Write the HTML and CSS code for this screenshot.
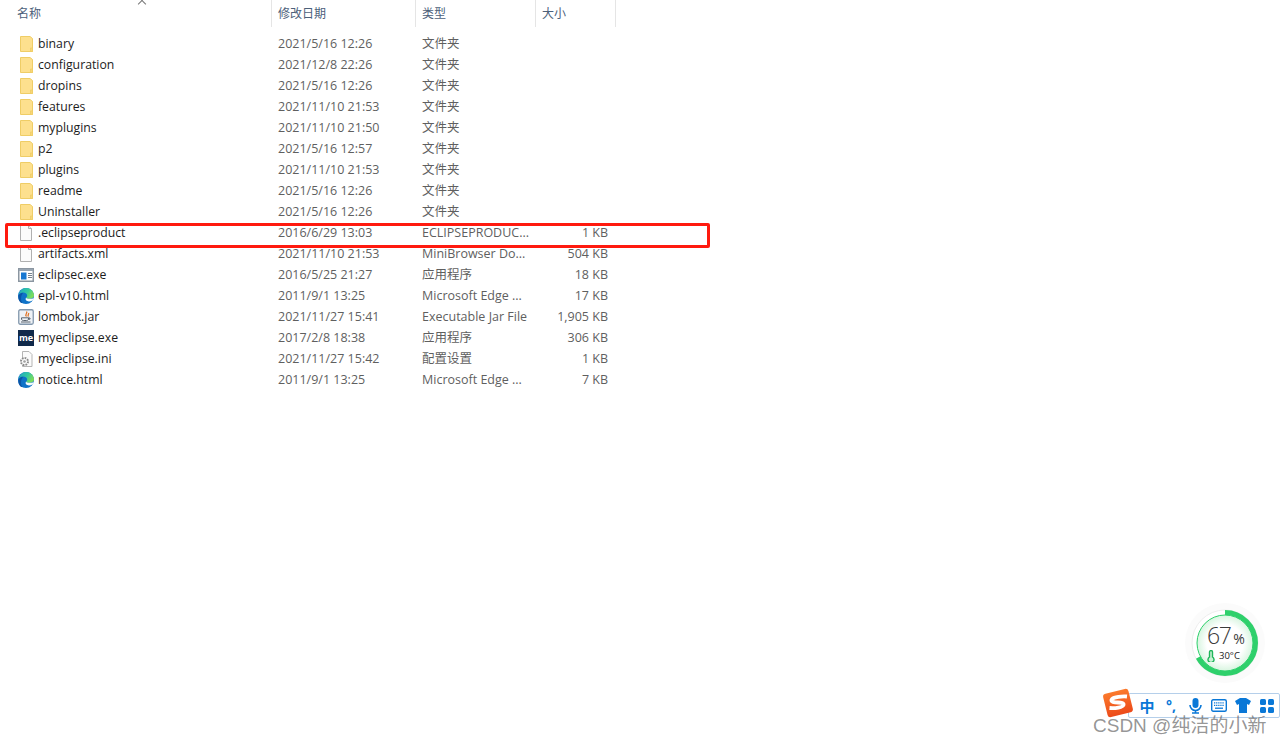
FILE: index.html
```html
<!DOCTYPE html>
<html lang="zh-CN">
  <head>
    <meta charset="utf-8">
    <title>myeclipse</title>
    <link rel="stylesheet" href="styles.css">
  </head>
  <body>
    <svg class="defs" width="0" height="0">
      <defs>
        <linearGradient id="edgeGreen" x1="0" y1="0" x2="1" y2=".4">
          <stop offset="0" stop-color="#1fa6c4"/>
          <stop offset=".6" stop-color="#33c8a0"/>
          <stop offset="1" stop-color="#7bdc5c"/>
        </linearGradient>
        <radialGradient id="gaugeGlow">
          <stop offset=".65" stop-color="#ffffff"/>
          <stop offset="1" stop-color="#d8f5e0"/>
        </radialGradient>
        <linearGradient id="sogouFill" x1="0" y1="0" x2="0" y2="1">
          <stop offset="0" stop-color="#fb7a2c"/>
          <stop offset="1" stop-color="#ec4a1a"/>
        </linearGradient>
        <symbol id="folder" viewBox="0 0 16 16">
          <path d="M2.500 .5h9.500l2.500 2v13h-12z" fill="#fde08e" stroke="#efcd66"/>
          <path d="M12.500 15.500v-3.500h2v3.500z" fill="#f8d678" stroke="#efcd66" stroke-width=".8"/>
        </symbol>
        <symbol id="file" viewBox="0 0 16 16">
          <path d="M2.500 .5h8l3 3v12h-11z" fill="#fbfbfb" stroke="#b0b0b0"/>
          <path d="M10.500 .5v3h3" fill="#eee" stroke="#b0b0b0"/>
        </symbol>
        <symbol id="exe" viewBox="0 0 16 16">
          <rect x=".75" y="1.750" width="14.500" height="12.500" fill="#fff" stroke="#8b96a1" stroke-width="1.500"/>
          <rect x="1" y="2" width="14" height="2" fill="#98a5b2"/>
          <rect x="3" y="5.500" width="5.500" height="7" fill="#1878d2"/>
          <path d="M10 6.500h4M10 8.500h4M10 10.500h4" stroke="#74818e"/>
        </symbol>
        <symbol id="edge" viewBox="0 0 16 16">
          <circle cx="8" cy="8" r="8" fill="#0e72c8"/>
          <path d="M3 15C.5 13 0 10 .5 7.500 1.500 5.500 3.500 4.500 5.500 4.500c-1.500 1.500-2.500 3.500-2.500 6 0 2 .5 3.500 1.500 4.500z" fill="#0a55a6"/>
          <path d="M.5 7C1.500 2.500 5 0 8 0c4.500 0 8 3.500 8 7.500 0 2.500-2.500 3.200-4.500 3.200-1.500 0-3-.4-3.500-1 .8-.5 1.200-1.200 1.200-2C9.200 5.700 7 4.500 5 4.500 3 4.500 1.200 5.500.5 7z" fill="url(#edgeGreen)"/>
          <path d="M8 9.700c-.8 1.300-.3 2.800 1.200 3.400 1.600.6 3.800.3 5.600-.9.5-.6.9-1.200 1.100-1.900-1 .4-2.700.6-4.400.4-1.500-.1-2.900-.4-3.500-1z" fill="#f4fbfb"/>
        </symbol>
        <symbol id="jar" viewBox="0 0 16 16">
          <rect x=".75" y=".75" width="14.500" height="14.500" rx="1.500" fill="#eef2f6" stroke="#8398ad" stroke-width="1.300"/>
          <path d="M8.500 2.500c1.500 2-2.500 3 0 5M10.500 4c.8 1.500-1.500 2 0 3.500" fill="none" stroke="#e0762a" stroke-width="1.300"/>
          <path d="M3.500 8.800h7v1.200c0 1-1 1.500-2 1.500h-3c-1 0-2-.5-2-1.500zM10.500 9h1.500v1.200h-1.500M3 13h9.500" fill="none" stroke="#59636e" stroke-width="1"/>
        </symbol>
        <symbol id="ini" viewBox="0 0 16 16">
          <path d="M4.500 .5h6.500l3 3v12h-9.500z" fill="#fbfbfb" stroke="#b5b5b5"/>
          <circle cx="6.500" cy="10.500" r="3.500" fill="#fff" stroke="#8a8a8a" stroke-width="2" stroke-dasharray="1.700 1"/>
          <circle cx="6.500" cy="10.500" r="1.300" fill="#a0a0a0"/>
        </symbol>
      </defs>
    </svg>

    <div class="explorer">
      <div class="list-head">
        <div class="col col-name">名称<span class="sort"></span></div>
        <div class="col col-date">修改日期</div>
        <div class="col col-type">类型</div>
        <div class="col col-size">大小</div>
      </div>

      <div class="rows">
        <div class="row"><div class="name"><svg class="ico"><use href="#folder"/></svg>binary</div><div class="date">2021/5/16 12:26</div><div class="type">文件夹</div><div class="size"></div></div>
        <div class="row"><div class="name"><svg class="ico"><use href="#folder"/></svg>configuration</div><div class="date">2021/12/8 22:26</div><div class="type">文件夹</div><div class="size"></div></div>
        <div class="row"><div class="name"><svg class="ico"><use href="#folder"/></svg>dropins</div><div class="date">2021/5/16 12:26</div><div class="type">文件夹</div><div class="size"></div></div>
        <div class="row"><div class="name"><svg class="ico"><use href="#folder"/></svg>features</div><div class="date">2021/11/10 21:53</div><div class="type">文件夹</div><div class="size"></div></div>
        <div class="row"><div class="name"><svg class="ico"><use href="#folder"/></svg>myplugins</div><div class="date">2021/11/10 21:50</div><div class="type">文件夹</div><div class="size"></div></div>
        <div class="row"><div class="name"><svg class="ico"><use href="#folder"/></svg>p2</div><div class="date">2021/5/16 12:57</div><div class="type">文件夹</div><div class="size"></div></div>
        <div class="row"><div class="name"><svg class="ico"><use href="#folder"/></svg>plugins</div><div class="date">2021/11/10 21:53</div><div class="type">文件夹</div><div class="size"></div></div>
        <div class="row"><div class="name"><svg class="ico"><use href="#folder"/></svg>readme</div><div class="date">2021/5/16 12:26</div><div class="type">文件夹</div><div class="size"></div></div>
        <div class="row"><div class="name"><svg class="ico"><use href="#folder"/></svg>Uninstaller</div><div class="date">2021/5/16 12:26</div><div class="type">文件夹</div><div class="size"></div></div>
        <div class="row marked"><div class="name"><svg class="ico"><use href="#file"/></svg>.eclipseproduct</div><div class="date">2016/6/29 13:03</div><div class="type">ECLIPSEPRODUC...</div><div class="size">1 KB</div></div>
        <div class="row"><div class="name"><svg class="ico"><use href="#file"/></svg>artifacts.xml</div><div class="date">2021/11/10 21:53</div><div class="type">MiniBrowser Do...</div><div class="size">504 KB</div></div>
        <div class="row"><div class="name"><svg class="ico"><use href="#exe"/></svg>eclipsec.exe</div><div class="date">2016/5/25 21:27</div><div class="type">应用程序</div><div class="size">18 KB</div></div>
        <div class="row"><div class="name"><svg class="ico"><use href="#edge"/></svg>epl-v10.html</div><div class="date">2011/9/1 13:25</div><div class="type">Microsoft Edge ...</div><div class="size">17 KB</div></div>
        <div class="row"><div class="name"><svg class="ico"><use href="#jar"/></svg>lombok.jar</div><div class="date">2021/11/27 15:41</div><div class="type">Executable Jar File</div><div class="size">1,905 KB</div></div>
        <div class="row"><div class="name"><span class="ico me">me</span>myeclipse.exe</div><div class="date">2017/2/8 18:38</div><div class="type">应用程序</div><div class="size">306 KB</div></div>
        <div class="row"><div class="name"><svg class="ico"><use href="#ini"/></svg>myeclipse.ini</div><div class="date">2021/11/27 15:42</div><div class="type">配置设置</div><div class="size">1 KB</div></div>
        <div class="row"><div class="name"><svg class="ico"><use href="#edge"/></svg>notice.html</div><div class="date">2011/9/1 13:25</div><div class="type">Microsoft Edge ...</div><div class="size">7 KB</div></div>
      </div>
    </div>

    <!-- floating stuff from the desktop -->
    <div class="gauge">
      <svg class="gauge-ring" width="80" height="80" viewBox="0 0 80 80">
        <circle cx="40" cy="40" r="40" fill="#fbfbfb"/>
        <circle cx="40" cy="40" r="33" fill="#ffffff" stroke="#eeeeee"/>
        <circle cx="40" cy="40" r="28" fill="url(#gaugeGlow)" stroke="#2ed06b"/>
        <circle cx="40" cy="40" r="30.500" fill="none" stroke="#2ed06b" stroke-width="5" stroke-dasharray="128.400 63.200" transform="rotate(-90 40 40)"/>
      </svg>
      <div class="gauge-num">67<span class="pct">%</span></div>
      <div class="gauge-temp">
        <svg width="8" height="12" viewBox="0 0 8 12"><path d="M2.500 7V2a1.500 1.500 0 0 1 3 0v5a3 3 0 1 1-3 0z" fill="#c9f0d4" stroke="#1fb65a" stroke-width="1.400"/></svg>
        30°C
      </div>
    </div>

    <div class="imebar">
      <span class="ime-cell ime-zh">中</span>
      <span class="ime-cell ime-punct">°,</span>
      <span class="ime-cell"><svg width="13" height="16" viewBox="0 0 13 16"><rect x="3.500" y="0" width="6" height="10" rx="3" fill="#0a78d7"/><path d="M1 7a5.500 5.500 0 0 0 11 0M6.500 12.500v2.500M3 15h7" fill="none" stroke="#0a78d7" stroke-width="1.600"/></svg></span>
      <span class="ime-cell"><svg width="16" height="13" viewBox="0 0 16 13"><rect x=".7" y=".7" width="14.600" height="11.600" rx="1.500" fill="none" stroke="#0a78d7" stroke-width="1.400"/><path d="M3 3.800h10M3 6.400h10" stroke="#0a78d7" stroke-dasharray="1.300 .8" stroke-width="1.300"/><path d="M4 9.200h8" stroke="#0a78d7" stroke-width="1.300"/></svg></span>
      <span class="ime-cell"><svg width="16" height="15" viewBox="0 0 16 15"><path d="M5 0h6l5 3-2 4-2-1v9H4V6L2 7 0 3z" fill="#0a78d7"/></svg></span>
      <span class="ime-cell"><svg width="14" height="14" viewBox="0 0 14 14"><g fill="#0a78d7"><rect width="6" height="6" rx="1.500"/><rect x="8" width="6" height="6" rx="1.500"/><rect y="8" width="6" height="6" rx="1.500"/><rect x="8" y="8" width="6" height="6" rx="1.500"/></g></svg></span>
    </div>
    <svg class="sogou" width="32" height="30" viewBox="0 0 32 30">
      <rect x="3" y="3" width="26" height="24" rx="3" fill="url(#sogouFill)" transform="rotate(-14 16 15)"/>
      <path d="M25 8.500c-5-.5-13 .5-15 2.500-2.500 3 3 3.500 6 3.500 3.500 0 6 .5 5.500 2.500-.8 2.300-8 3.500-14 3" fill="none" stroke="#fff" stroke-width="3.800"/>
    </svg>
    <div class="watermark">CSDN @纯洁的小新</div>
  </body>
</html>
```

FILE: styles.css
```css
*, *::after{
  padding: 0px;
  margin: 0px;
  box-sizing: border-box;
}

:root{
  --headText: #4c607a;
  --cellText: #5f5f5f;
  --nameText: #1c1c1c;
  --divider: #e5e5e5;
  --mark: #ff1a0f;
  --imeBlue: #0a78d7;
}

html, body{
  height: 100%;
  overflow: hidden;
}

body{
  position: relative;
  background-color: white;
  font-family: "Open Sans", "Noto Sans CJK SC", sans-serif;
  font-size: 12.5px;
}

.defs{
  position: absolute;
}

.explorer{
  width: 616px;
}

.list-head{
  display: flex;
  height: 27px;
  color: var(--headText);
}

.col{
  position: relative;
  font-size: 12px;
  line-height: 26px;
  padding-left: 6px;
  border-right: 1px solid var(--divider);
  font-family: "Noto Sans CJK SC", sans-serif;
}

.col-name{
  width: 272px;
  padding-left: 17px;
}

.col-date{
  width: 144px;
}

.col-type{
  width: 120px;
}

.col-size{
  width: 80px;
}

.sort{
  position: absolute;
  left: 139px;
  top: 1px;
  width: 6px;
  height: 6px;
  border-left: 1px solid #777;
  border-top: 1px solid #777;
  transform: rotate(45deg);
}

.rows{
  padding-top: 6px;
}

.row{
  display: flex;
  height: 21px;
  line-height: 21px;
  color: var(--cellText);
  white-space: nowrap;
}

.marked{
  position: relative;
}

.marked::after{
  content: "";
  position: absolute;
  left: 5px;
  top: 1px;
  width: 705px;
  height: 25px;
  border: 3px solid var(--mark);
  border-radius: 2px;
}

.name{
  width: 272px;
  display: flex;
  align-items: center;
  padding-left: 18px;
  font-size: 12.25px;
  color: var(--nameText);
}

.ico{
  width: 16px;
  height: 16px;
  margin-right: 4px;
  flex-shrink: 0;
}

.me{
  background-color: #10294a;
  color: white;
  font-size: 9px;
  font-weight: bold;
  line-height: 15px;
  text-align: center;
}

.date{
  width: 144px;
  padding-left: 6px;
}

.type{
  width: 120px;
  padding-left: 6px;
}

.size{
  width: 72px;
  text-align: right;
}

.gauge{
  position: absolute;
  left: 1185px;
  top: 603px;
  width: 80px;
  height: 80px;
}

.gauge-ring{
  position: absolute;
  left: 0px;
  top: 0px;
}

.gauge-num{
  position: absolute;
  left: 22px;
  top: 20px;
  font-size: 23px;
  line-height: 24px;
  font-weight: 300;
  letter-spacing: -1.500px;
  color: #3a3a3a;
  white-space: nowrap;
}

.pct{
  font-size: 14px;
  font-weight: 400;
  letter-spacing: 0px;
  margin-left: 3px;
}

.gauge-temp{
  position: absolute;
  left: 22px;
  top: 47px;
  display: flex;
  align-items: center;
  gap: 4px;
  font-size: 9.500px;
  line-height: 12px;
  color: #222;
  white-space: nowrap;
}

.imebar{
  position: absolute;
  left: 1128px;
  top: 693px;
  width: 152px;
  height: 25px;
  display: flex;
  align-items: center;
  padding-left: 6px;
  background-color: white;
  border: 1px solid #b5cfea;
  border-radius: 2px;
}

.ime-cell{
  width: 24px;
  display: flex;
  justify-content: center;
  align-items: center;
}

.ime-zh{
  color: var(--imeBlue);
  font-family: "Noto Sans CJK SC", sans-serif;
  font-size: 15px;
  line-height: 20px;
  font-weight: bold;
}

.ime-punct{
  color: var(--imeBlue);
  font-size: 14px;
  font-weight: bold;
  line-height: 14px;
}

.sogou{
  position: absolute;
  left: 1102px;
  top: 688px;
}

.watermark{
  position: absolute;
  left: 1093px;
  top: 714px;
  font-family: "Liberation Sans", "Noto Sans CJK SC", sans-serif;
  font-size: 19px;
  line-height: 24px;
  color: rgba(90, 90, 90, 0.65);
  white-space: nowrap;
}
```
